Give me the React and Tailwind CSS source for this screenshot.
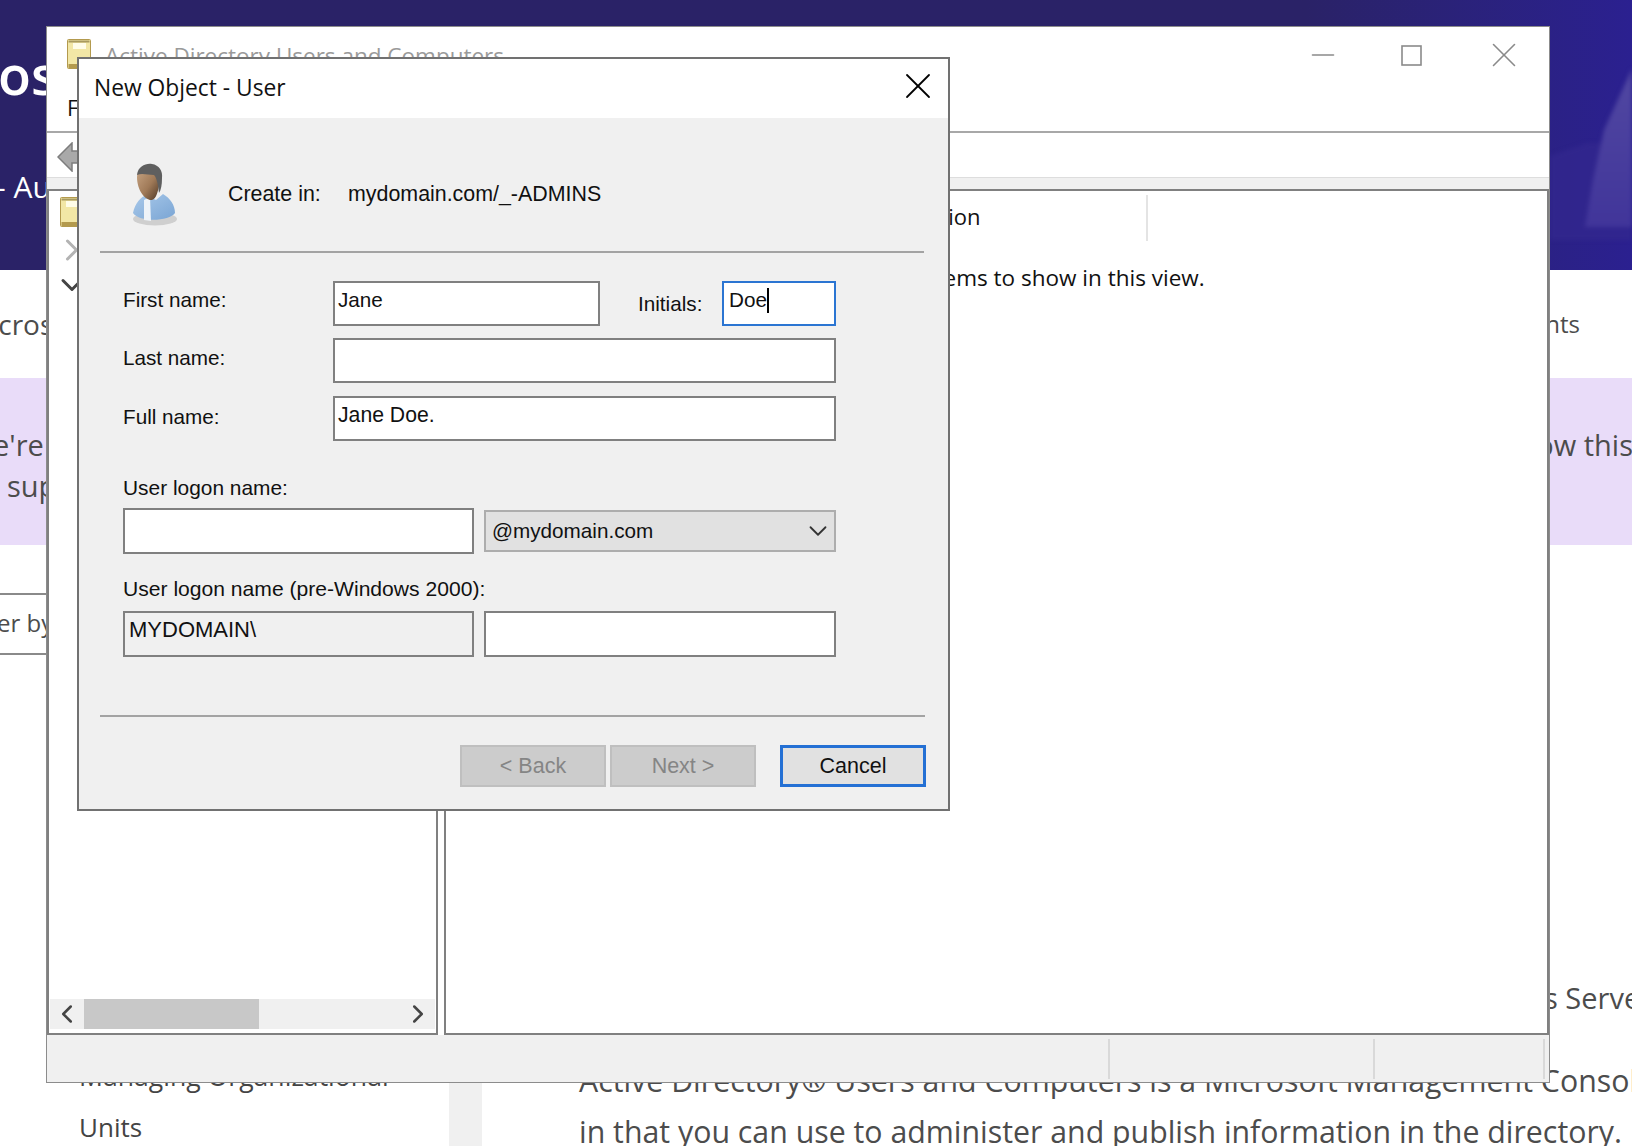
import React from 'react';
import { ChevronLeft, ChevronRight, ChevronDown, X, Minus } from 'lucide-react';

const SnapinIcon = ({ className }) => (
  <svg viewBox="0 0 24 30" className={className}>
    <rect x="0.5" y="0.5" width="23" height="29" rx="1" fill="#f2e7a6" stroke="#b39a4e" />
    <rect x="1.5" y="25" width="21" height="4" fill="#b39a4e" />
    <rect x="6" y="4" width="13" height="6" fill="#fffde8" />
    <rect x="1.5" y="1.5" width="21" height="2" fill="#a89a60" />
  </svg>
);

const PersonIcon = () => (
  <svg viewBox="0 0 46 63" className="w-[46px] h-[63px]">
    <defs>
      <linearGradient id="skin" x1="0" y1="0" x2="1" y2="1">
        <stop offset="0" stopColor="#c8a584" />
        <stop offset="0.55" stopColor="#a07a58" />
        <stop offset="1" stopColor="#4f3826" />
      </linearGradient>
      <linearGradient id="coat" x1="0" y1="0" x2="1" y2="1">
        <stop offset="0" stopColor="#a9c9ea" />
        <stop offset="1" stopColor="#7aa5d4" />
      </linearGradient>
    </defs>
    <ellipse cx="23" cy="56" rx="22" ry="6.5" fill="#cfcfcf" />
    <path d="M1 50C3 40 9 34 14 32L24 37L31 31C38 35 43 42 43 50C38 58 8 60 1 50z" fill="url(#coat)" />
    <path d="M12 37L18 34L19 58L12 57z" fill="#eef3f8" />
    <path d="M5 14C5 7 12 4 18 5C26 6 28 14 27 22C26 29 24 36 20 37C14 38 5 28 5 14z" fill="url(#skin)" />
    <path d="M5 12C6 3 14 0 20 1C27 2 31 8 30 15C30 22 29 27 27 30C26 22 25 15 22 12C16 12 10 10 5 12z" fill="#5f5f5f" />
  </svg>
);

const Field = ({ children, caret, focused, className = '' }) => (
  <div className={`h-[45px] border-2 leading-[34px] whitespace-nowrap ${focused ? 'border-[#2b75d2]' : 'border-[#808080]'} ${className}`}>
    {children}
    {caret && <span className="inline-block w-[2px] h-[25px] bg-black align-[-6px]" />}
  </div>
);

const NameRow = ({ label, mt, labelClass = 'leading-[38px]', children }) => (
  <div className={`flex items-start ${mt}`}>
    <div className={`w-[210px] shrink-0 ${labelClass}`}>{label}</div>
    {children}
  </div>
);

const NewUserDialog = () => (
  <div className="absolute left-[77px] top-[57px] w-[873px] h-[754px] border-2 border-[#717171] bg-[#f0f0f0] text-[#111] font-['Liberation_Sans',sans-serif] text-[20.7px] flex flex-col">
    <div className="h-[59px] bg-white shrink-0 flex items-center justify-between pl-[15px] pr-[8px] pb-[2px]">
      <span className="font-['Open_Sans',sans-serif] text-[22.8px] mt-[1px]">New Object - User</span>
      <X size={44} strokeWidth={1.8} absoluteStrokeWidth className="text-black -mt-[3px]" />
    </div>

    <div className="flex items-center mt-[45px] h-[63px] pl-[53px] text-[21.4px]">
      <PersonIcon />
      <span className="ml-[50px] w-[120px]">Create in:</span>
      <span>mydomain.com/_-ADMINS</span>
    </div>
    <div className="h-[2px] bg-[#a3a3a3] mt-[25px] ml-[21px] mr-[24px]" />

    <div className="pl-[44px] pr-[112px] mt-[28px]">
      <NameRow label="First name:">
        <Field className="w-[267px] bg-white pl-[3px]">Jane</Field>
        <div className="w-[122px] pl-[38px] pt-[3px] leading-[40px]">Initials:</div>
        <Field focused caret className="flex-1 bg-white pl-[5px]">Doe</Field>
      </NameRow>
      <NameRow label="Last name:" labelClass="leading-[40px]" mt="mt-[12px]">
        <Field className="flex-1 bg-white" />
      </NameRow>
      <NameRow label="Full name:" labelClass="leading-[42px]" mt="mt-[13px]">
        <Field className="flex-1 bg-white pl-[3px] text-[21.2px]">Jane Doe.</Field>
      </NameRow>

      <div className="mt-[35px] leading-[24px] text-[20.9px]">User logon name:</div>
      <div className="flex items-center gap-[10px] mt-[8px]">
        <Field className="w-[351px] bg-white h-[46px]" />
        <div className="flex-1 h-[42px] bg-[#e1e1e1] border-2 border-[#adadad] flex items-center justify-between pl-[6px] pr-[1px]">
          <span>@mydomain.com</span>
          <ChevronDown size={30} strokeWidth={1.8} absoluteStrokeWidth className="text-[#333]" />
        </div>
      </div>

      <div className="mt-[23px] leading-[24px] text-[21.1px]">User logon name (pre-Windows 2000):</div>
      <div className="flex gap-[10px] mt-[10px]">
        <Field className="w-[351px] bg-[#f0f0f0] h-[46px] pl-[4px] text-[22px]">MYDOMAIN\</Field>
        <Field className="flex-1 bg-white h-[46px]" />
      </div>
    </div>

    <div className="h-[2px] bg-[#a3a3a3] mt-[58px] ml-[21px] mr-[23px]" />
    <div className="flex justify-end mt-[28px] pr-[22px] text-[21.5px]">
      <div className="w-[146px] h-[42px] bg-[#cccccc] border-2 border-[#bfbfbf] text-[#858585] flex items-center justify-center">&lt; Back</div>
      <div className="w-[146px] h-[42px] bg-[#cccccc] border-2 border-[#bfbfbf] text-[#858585] flex items-center justify-center ml-[4px]">Next &gt;</div>
      <div className="w-[146px] h-[42px] bg-[#e1e1e1] border-[3px] border-[#2470d4] flex items-center justify-center ml-[24px]">Cancel</div>
    </div>
  </div>
);

const AdWindow = () => (
  <div className="absolute left-[46px] top-[26px] w-[1504px] h-[1057px] bg-white border border-[#8c8c8c] flex flex-col font-['Open_Sans',sans-serif] text-[#111]">
    <div className="h-[54px] shrink-0 flex items-center justify-between pl-[20px] pr-[24px]">
      <div className="flex items-center gap-[14px]">
        <SnapinIcon className="w-[24px] h-[30px]" />
        <span className="text-[22.5px] text-[#9a9a9a] mt-[4px] whitespace-nowrap">Active Directory Users and Computers</span>
      </div>
      <div className="flex items-center text-[#8a8a8a] mt-[2px]">
        <Minus size={36} strokeWidth={1.6} absoluteStrokeWidth className="w-[40px]" />
        <svg viewBox="0 0 21 21" className="w-[21px] h-[21px] ml-[58px] mr-[9px]">
          <rect x="1" y="1" width="19" height="19" fill="none" stroke="currentColor" strokeWidth="1.6" />
        </svg>
        <X size={42} strokeWidth={1.6} absoluteStrokeWidth className="ml-[52px]" />
      </div>
    </div>
    <div className="h-[50px] shrink-0 pl-[20px] text-[22px] leading-[52px]">File</div>
    <div className="h-[46px] shrink-0 border-t-2 border-[#a8a8a8] pl-[10px] pt-[9px]">
      <svg viewBox="0 0 30 30" className="w-[30px] h-[30px]">
        <path d="M1 15L15 1v8h14v12H15v8z" fill="#a9a9a9" stroke="#7d7d7d" strokeWidth="1.5" />
      </svg>
    </div>
    <div className="h-[12px] shrink-0 bg-[#f0f0f0] border-t border-[#dddddd]" />

    <div className="flex-1 flex min-h-0">
      <div className="w-[391px] shrink-0 border-2 border-[#808080] flex flex-col">
        <div className="flex-1 pl-[11px] pt-[6px]">
          <SnapinIcon className="w-[24px] h-[30px]" />
          <ChevronRight size={36} className="text-[#b3b3b3] mt-[5px] -ml-[6px]" />
          <ChevronDown size={36} className="text-[#444] -mt-[1px] -ml-[6px]" />
        </div>
        <div className="h-[30px] mx-[1px] mb-[4px] bg-[#f0f0f0] flex items-center justify-between px-[2px]">
          <ChevronLeft size={30} strokeWidth={2} className="text-[#444]" />
          <div className="w-[175px] h-[30px] bg-[#c8c8c8] mr-auto ml-[2px]" />
          <ChevronRight size={30} strokeWidth={2} className="text-[#444]" />
        </div>
      </div>
      <div className="flex-1 ml-[6px] border-2 border-[#808080]">
        <div className="flex h-[52px] text-[22px]">
          <div className="w-[702px] border-r-2 border-[#e4e4e4] h-[46px] mt-[4px] pl-[417px] leading-[42px] whitespace-nowrap">Description</div>
        </div>
        <div className="pl-[344px] mt-[18px] text-[22.5px] whitespace-nowrap">There are no items to show in this view.</div>
      </div>
    </div>

    <div className="h-[47px] shrink-0 bg-[#f0f0f0] flex justify-end pt-[4px] pr-[4px]">
      <div className="w-[265px] h-[40px] border-l-2 border-[#d9d9d9]" />
      <div className="w-[172px] h-[40px] border-x-2 border-[#d9d9d9]" />
    </div>
  </div>
);

const HeaderArt = () => (
  <svg viewBox="0 0 82 270" className="absolute right-0 top-0 w-[82px] h-[270px] blur-[2px]">
    <defs>
      <linearGradient id="fade" x1="0" y1="0" x2="0" y2="1">
        <stop offset="0" stopColor="#5249a2" />
        <stop offset="1" stopColor="#41359a" />
      </linearGradient>
    </defs>
    <path d="M-4 157L37 143H86V240H-4z" fill="#33288e" opacity="0.7" />
    <path d="M86 60L54 130L43 180L35 227H86z" fill="url(#fade)" />
  </svg>
);

export default function App() {
  return (
    <div className="relative w-[1632px] h-[1146px] overflow-hidden bg-white font-['Open_Sans',sans-serif] text-[#4c4c4c]">
      <header className="relative h-[270px] bg-linear-to-r from-[#2a2267] via-[#2a2267] via-80% to-[#2b2090] text-white overflow-hidden">
        <HeaderArt />
        <div className="pt-[39px] -ml-[117px] text-[54px] leading-[70px] font-semibold whitespace-nowrap">Microsoft</div>
        <div className="mt-[58px] -ml-[4px] text-[30px] leading-[40px] whitespace-nowrap">- Authentication</div>
      </header>

      <div className="h-[108px] flex items-center text-[28px] whitespace-nowrap">
        <span className="-ml-[34px]">Microsoft</span>
        <span className="ml-auto mr-[52px] text-[24px]">Documents</span>
      </div>

      <div className="h-[167px] bg-[#e9dcf9] pt-[46px] text-[29px] leading-[41px] whitespace-nowrap flex items-start">
        <div>
          <div className="-ml-[7px]">e're</div>
          <div className="ml-[7px]">sup</div>
        </div>
        <div className="ml-auto -mr-[1px]">how this</div>
      </div>

      <div className="h-[110px] pt-[48px]">
        <div className="w-[60px] h-[62px] border-y-2 border-[#8a8a8a] text-[24px] leading-[56px] whitespace-nowrap overflow-hidden">
          <span className="-ml-[3px]">er by</span>
        </div>
      </div>

      <div className="flex h-[491px]">
        <aside className="w-[449px] shrink-0 pl-[79px] pt-[396px] text-[26px] leading-[51px] text-[#444]">
          <div className="whitespace-nowrap text-[26.6px]">Managing Organizational</div>
          <div>Units</div>
        </aside>
        <div className="w-[33px] shrink-0 bg-[#f0f0f0]" />
        <main className="flex-1 pl-[97px] pt-[323px] text-[30.3px] whitespace-nowrap">
          <div className="ml-[965px] leading-[40px] text-[29px]">s Server</div>
          <div className="mt-[37px] leading-[51px]">Active Directory® Users and Computers is a Microsoft Management Console</div>
          <div className="leading-[51px]">in that you can use to administer and publish information in the directory.</div>
        </main>
      </div>

      <AdWindow />
      <NewUserDialog />
    </div>
  );
}
